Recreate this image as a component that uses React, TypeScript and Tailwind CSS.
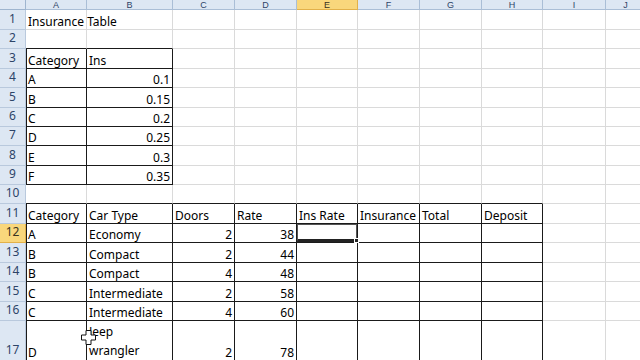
import React from "react";

// column widths in px: row-number gutter, then A..J
const COLS = [26, 61, 86, 62, 62, 61, 62, 62, 61, 63, 40];
const LETTERS = ["A", "B", "C", "D", "E", "F", "G", "H", "I", "J"];
// row heights for rows 1..17
const ROWS = [20, 19, 20, 19, 20, 19, 19, 20, 19, 19, 20, 19, 20, 19, 20, 19, 40];

type Cell = { v: string; right?: boolean; wrap?: string[] };

const DATA: Record<string, Cell> = {
  "1-1": { v: "Insurance Table" },
  "3-1": { v: "Category" },
  "3-2": { v: "Ins" },
  "4-1": { v: "A" },
  "4-2": { v: "0.1", right: true },
  "5-1": { v: "B" },
  "5-2": { v: "0.15", right: true },
  "6-1": { v: "C" },
  "6-2": { v: "0.2", right: true },
  "7-1": { v: "D" },
  "7-2": { v: "0.25", right: true },
  "8-1": { v: "E" },
  "8-2": { v: "0.3", right: true },
  "9-1": { v: "F" },
  "9-2": { v: "0.35", right: true },
  "11-1": { v: "Category" },
  "11-2": { v: "Car Type" },
  "11-3": { v: "Doors" },
  "11-4": { v: "Rate" },
  "11-5": { v: "Ins Rate" },
  "11-6": { v: "Insurance" },
  "11-7": { v: "Total" },
  "11-8": { v: "Deposit" },
  "12-1": { v: "A" },
  "12-2": { v: "Economy" },
  "12-3": { v: "2", right: true },
  "12-4": { v: "38", right: true },
  "13-1": { v: "B" },
  "13-2": { v: "Compact" },
  "13-3": { v: "2", right: true },
  "13-4": { v: "44", right: true },
  "14-1": { v: "B" },
  "14-2": { v: "Compact" },
  "14-3": { v: "4", right: true },
  "14-4": { v: "48", right: true },
  "15-1": { v: "C" },
  "15-2": { v: "Intermediate" },
  "15-3": { v: "2", right: true },
  "15-4": { v: "58", right: true },
  "16-1": { v: "C" },
  "16-2": { v: "Intermediate" },
  "16-3": { v: "4", right: true },
  "16-4": { v: "60", right: true },
  "17-1": { v: "D" },
  "17-2": { v: "", wrap: ["Jeep", "wrangler"] },
  "17-3": { v: "2", right: true },
  "17-4": { v: "78", right: true },
};

function inTable(r: number, c: number) {
  if (r >= 3 && r <= 9 && c >= 1 && c <= 2) return true;
  if (r >= 11 && r <= 17 && c >= 1 && c <= 8) return true;
  return false;
}

function CrossCursor() {
  return (
    <svg className="absolute left-[81px] top-[330px]" width="15" height="15" viewBox="0 0 15 15">
      <path
        d="M5 0.5h5v4.5h4.5v5h-4.5v4.5h-5v-4.5h-4.5v-5h4.5z"
        fill="#fff"
        stroke="#111"
        strokeWidth="1"
      />
    </svg>
  );
}

export default function App() {
  const grid = COLS.map((w) => `${w}px`).join(" ");
  return (
    <div
      className="relative h-[360px] w-[640px] overflow-hidden bg-white text-[12px] text-black"
      style={{ fontFamily: '"Noto Sans", "Open Sans", sans-serif' }}
    >
      <div className="grid" style={{ gridTemplateColumns: grid }}>
        {/* column header strip, top part scrolled off */}
        <div className="h-[10px] border-b border-r border-[#9fb5cf] bg-[#dfe8f4]" />
        {COLS.slice(1).map((_, i) => {
          const sel = i === 4;
          return (
            <div
              key={i}
              className={`flex h-[10px] items-start justify-center border-b border-r text-[9px] leading-[10px] ${
                sel
                  ? "border-[#e2b14a] bg-[#f9d77c] text-[#3a3320]"
                  : "border-[#aabed6] bg-[#dde7f3] text-[#2d4468]"
              }`}
              style={{ fontFamily: '"Liberation Sans", Arial, sans-serif' }}
            >
              {LETTERS[i] ?? ""}
            </div>
          );
        })}

        {ROWS.map((h, ri) => {
          const r = ri + 1;
          return (
            <React.Fragment key={r}>
              <div
                className={`flex items-end justify-center border-b border-r pb-[1px] text-[12px] ${
                  r === 12
                    ? "border-[#e2b14a] bg-[#f9d77c] text-[#3a3320]"
                    : "border-[#b9c9dd] bg-[#dde7f3] text-[#2d4468]"
                }`}
                style={{ height: h }}
              >
                {r}
              </div>
              {COLS.slice(1).map((_, ci) => {
                const c = ci + 1;
                const cell = DATA[`${r}-${c}`];
                const me = inTable(r, c);
                const rightBlack = me || inTable(r, c + 1);
                const bottomBlack = me || inTable(r + 1, c);
                const leftBlack = c === 1 && me;
                return (
                  <div
                    key={c}
                    className={`relative flex items-end overflow-visible whitespace-nowrap border-b border-r px-[2px] leading-[15px] ${
                      rightBlack ? "border-r-[#1a1a1a]" : "border-r-[#dadada]"
                    } ${bottomBlack ? "border-b-[#1a1a1a]" : "border-b-[#dadada]"} ${
                      leftBlack ? "border-l border-l-[#1a1a1a] pl-[1px]" : ""
                    } ${cell?.right ? "justify-end" : ""}`}
                    style={{ height: h }}
                  >
                    {cell?.wrap ? (
                      <div className="flex flex-col leading-[19px]">
                        {cell.wrap.map((w) => (
                          <span key={w}>{w}</span>
                        ))}
                      </div>
                    ) : (
                      <span className="relative z-10">{cell?.v}</span>
                    )}
                    {r === 12 && c === 5 && (
                      <div className="absolute inset-0 z-20 border border-b-[3px] border-[#555] border-b-[#222]">
                        <div className="absolute -bottom-[4px] -right-[3px] h-[5px] w-[5px] border border-white bg-[#222]" />
                      </div>
                    )}
                  </div>
                );
              })}
            </React.Fragment>
          );
        })}
      </div>
      <CrossCursor />
    </div>
  );
}
